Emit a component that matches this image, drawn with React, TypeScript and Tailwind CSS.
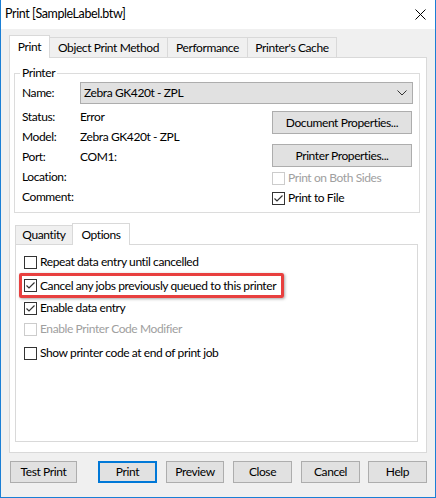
import React from "react";

const Box = ({ checked, disabled }: { checked?: boolean; disabled?: boolean }) => (
  <span
    className={`w-[13px] h-[13px] shrink-0 bg-white border flex items-center justify-center ${
      disabled ? "border-[#cccccc]" : "border-[#333333]"
    }`}
  >
    {checked && (
      <svg width="11" height="11" viewBox="0 0 11 11">
        <path d="M1.5 5.5 L4 8 L9.5 2.5" fill="none" stroke="#333" strokeWidth="1.2" />
      </svg>
    )}
  </span>
);

const CheckRow = ({
  label,
  checked,
  disabled,
  className = "",
}: {
  label: string;
  checked?: boolean;
  disabled?: boolean;
  className?: string;
}) => (
  <div className={`h-[20px] flex items-center gap-[3px] whitespace-nowrap ${className}`}>
    <Box checked={checked} disabled={disabled} />
    <span className={disabled ? "text-[#a0a0a0]" : ""}>{label}</span>
  </div>
);

const Btn = ({ label, className = "", primary }: { label: string; className?: string; primary?: boolean }) => (
  <button
    className={`h-[22px] bg-[#e1e1e1] flex items-center justify-center whitespace-nowrap ${
      primary ? "border-2 border-[#0078d7]" : "border border-[#adadad]"
    } ${className}`}
  >
    {label}
  </button>
);

const Tab = ({ label, active, w, h }: { label: string; active?: boolean; w: string; h: string }) => (
  <div
    className={`${w} ${h} -ml-px first:ml-0 flex items-center justify-center whitespace-nowrap border-x border-t border-[#d9d9d9] ${
      active ? "bg-white relative z-10 -mb-px" : "bg-[#f0f0f0]"
    }`}
  >
    {label}
  </div>
);

export default function App() {
  return (
    <div className="w-[436px] h-[498px] flex flex-col bg-[#f0f0f0] border-x border-b border-[#1b7fd5] text-[12px] tracking-[-0.4px] leading-none text-black font-['Lato',sans-serif]">
      {/* title bar */}
      <div className="h-[29px] shrink-0 bg-white flex items-center justify-between pl-[4px] pr-[9px] text-[12.5px]">
        <span>Print [SampleLabel.btw]</span>
        <svg width="11" height="11" viewBox="0 0 11 11">
          <path d="M0.5 0.5 L10.5 10.5 M10.5 0.5 L0.5 10.5" stroke="#000" strokeWidth="1" />
        </svg>
      </div>

      <div className="flex-1 flex flex-col pt-[6px] px-[8px]">
        {/* main tabs */}
        <div className="h-[22px] flex items-end">
          <Tab label="Print" active w="w-[41px]" h="h-[23px]" />
          <Tab label="Object Print Method" w="w-[119px]" h="h-[20px]" />
          <Tab label="Performance" w="w-[81px]" h="h-[20px]" />
          <Tab label="Printer's Cache" w="w-[90px]" h="h-[20px]" />
        </div>

        <div className="h-[396px] bg-white border border-[#d9d9d9] flex flex-col">
          {/* Printer group */}
          <fieldset className="mt-[7px] ml-[4px] w-[406px] border border-[#dcdcdc] pl-[5px] pr-[6px] pb-[4px]">
            <legend className="px-[2px] leading-[16px]">Printer</legend>
            <div className="ml-[2px]">
              <div className="mt-[1px] flex items-center">
                <span className="w-[58px]">Name:</span>
                <div className="flex-1 h-[22px] bg-[#e1e1e1] border border-[#adadad] flex items-center justify-between pl-[3px] pr-[5px]">
                  <span>Zebra GK420t - ZPL</span>
                  <svg width="10" height="6" viewBox="0 0 10 6">
                    <path d="M0.5 0.5 L5 5 L9.5 0.5" fill="none" stroke="#333" strokeWidth="1" />
                  </svg>
                </div>
              </div>

              <div className="mt-[3px] flex">
                <div className="flex-1 flex flex-col">
                  {[
                    ["Status:", "Error"],
                    ["Model:", "Zebra GK420t - ZPL"],
                    ["Port:", "COM1:"],
                    ["Location:", ""],
                    ["Comment:", ""],
                  ].map(([k, v]) => (
                    <div key={k} className="h-[20px] flex items-center">
                      <span className="w-[58px]">{k}</span>
                      <span>{v}</span>
                    </div>
                  ))}
                </div>
                <div className="w-[140px] mr-[1px] flex flex-col">
                  <Btn label="Document Properties..." className="mt-[4px] h-[23px]" />
                  <Btn label="Printer Properties..." className="mt-[10px] h-[23px]" />
                  <CheckRow label="Print on Both Sides" disabled className="mt-[1px]" />
                  <CheckRow label="Print to File" checked />
                </div>
              </div>
            </div>
          </fieldset>

          {/* inner tabs */}
          <div className="mt-[10px] ml-[5px] h-[21px] flex items-end">
            <Tab label="Quantity" w="w-[58px]" h="h-[19px]" />
            <Tab label="Options" active w="w-[58px]" h="h-[22px]" />
          </div>
          <div className="ml-[5px] w-[403px] h-[198px] bg-white border border-[#d9d9d9] pl-[8px] pt-[7px] flex flex-col">
            <CheckRow label="Repeat data entry until cancelled" />
            <div className="mt-[1px] -ml-[5px] w-[265px] h-[25px] border-[3px] border-[#e8403f] rounded-[2px] shadow-[1px_1px_3px_rgba(0,0,0,0.35)] pl-[2px] flex items-center">
              <CheckRow label="Cancel any jobs previously queued to this printer" checked />
            </div>
            <CheckRow label="Enable data entry" checked />
            <CheckRow label="Enable Printer Code Modifier" disabled className="mt-[1px]" />
            <CheckRow label="Show printer code at end of print job" className="mt-[4px]" />
          </div>
        </div>

        {/* buttons */}
        <div className="mt-[8px] flex">
          <Btn label="Test Print" className="ml-[1px] w-[67px]" />
          <Btn label="Print" primary className="ml-[21px] w-[59px]" />
          <Btn label="Preview" className="ml-[9px] w-[58px]" />
          <Btn label="Close" className="ml-[9px] w-[59px]" />
          <Btn label="Cancel" className="ml-[9px] w-[59px]" />
          <Btn label="Help" className="ml-[8px] w-[59px]" />
        </div>
      </div>
    </div>
  );
}
